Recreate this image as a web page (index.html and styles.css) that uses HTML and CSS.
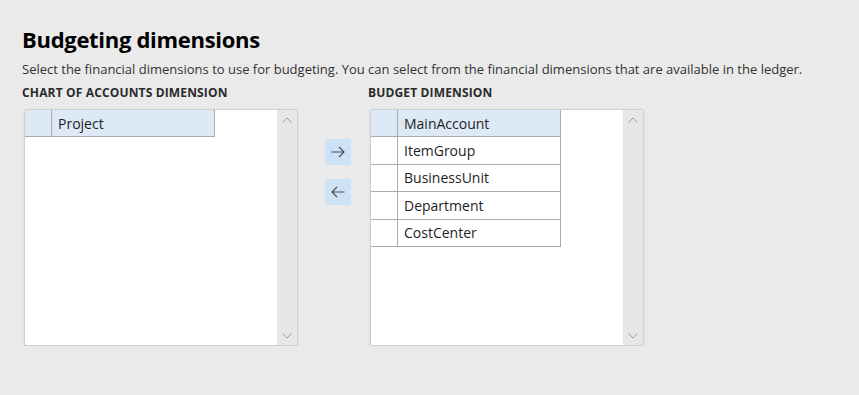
FILE: index.html
```html
<!DOCTYPE html>
<html lang="en">
<head>
    <meta charset="UTF-8">
    <meta name="viewport" content="width=device-width, initial-scale=1.0">
    <title>Budgeting dimensions</title>
    <link rel="stylesheet" href="styles.css">
</head>
<body>
    <div class="page">
        <h1>Budgeting dimensions</h1>
        <p class="intro">Select the financial dimensions to use for budgeting. You can select from the financial dimensions that are available in the ledger.</p>

        <div class="dimensions">
            <div class="panel">
                <div class="panel-label">CHART OF ACCOUNTS DIMENSION</div>
                <div class="list-box">
                    <table class="grid">
                        <tr class="selected"><td class="marker"></td><td>Project</td></tr>
                    </table>
                    <div class="scrollbar">
                        <svg width="10" height="6" viewBox="0 0 10 6"><path d="M0.5 5.5 L5 1 L9.5 5.5" fill="none" stroke="#9a9a9a" stroke-width="1"/></svg>
                        <svg width="10" height="6" viewBox="0 0 10 6"><path d="M0.5 0.5 L5 5 L9.5 0.5" fill="none" stroke="#9a9a9a" stroke-width="1"/></svg>
                    </div>
                </div>
            </div>

            <div class="transfer">
                <button class="move-btn" title="Add">
                    <svg width="16" height="16" viewBox="0 0 16 16"><path d="M1.5 8 H14 M9 3 L14 8 L9 13" fill="none" stroke="#4a4a4a" stroke-width="1.1"/></svg>
                </button>
                <button class="move-btn" title="Remove">
                    <svg width="16" height="16" viewBox="0 0 16 16"><path d="M14.5 8 H2 M7 3 L2 8 L7 13" fill="none" stroke="#4a4a4a" stroke-width="1.1"/></svg>
                </button>
            </div>

            <div class="panel">
                <div class="panel-label">BUDGET DIMENSION</div>
                <div class="list-box">
                    <table class="grid">
                        <tr class="selected"><td class="marker"></td><td>MainAccount</td></tr>
                        <tr><td class="marker"></td><td>ItemGroup</td></tr>
                        <tr><td class="marker"></td><td>BusinessUnit</td></tr>
                        <tr><td class="marker"></td><td>Department</td></tr>
                        <tr><td class="marker"></td><td>CostCenter</td></tr>
                    </table>
                    <div class="scrollbar">
                        <svg width="10" height="6" viewBox="0 0 10 6"><path d="M0.5 5.5 L5 1 L9.5 5.5" fill="none" stroke="#9a9a9a" stroke-width="1"/></svg>
                        <svg width="10" height="6" viewBox="0 0 10 6"><path d="M0.5 0.5 L5 5 L9.5 0.5" fill="none" stroke="#9a9a9a" stroke-width="1"/></svg>
                    </div>
                </div>
            </div>
        </div>
    </div>
</body>
</html>
```

FILE: styles.css
```css
body {
    margin: 0;
    background-color: #eaeaea;
    font-family: "Open Sans", "Noto Sans", sans-serif;
    color: #222;
}
.page {
    padding: 23px 22px 0 22px;
}
h1 {
    margin: 0;
    font-size: 22px;
    font-weight: 700;
    color: #000;
    line-height: 32px;
    letter-spacing: -0.3px;
}
.intro {
    margin: 5px 0 0 0;
    font-size: 13px;
    line-height: 18px;
    color: #333;
}
.dimensions {
    display: flex;
    align-items: flex-start;
    margin-top: 7px;
}
.panel {
    width: 276px;
}
.panel-label {
    font-size: 12px;
    font-weight: 700;
    color: #2b2b2b;
    line-height: 16px;
    letter-spacing: 0.15px;
    margin-bottom: 8px;
}
.list-box {
    display: flex;
    width: 274px;
    height: 237px;
    margin-left: 2px;
    box-sizing: border-box;
    border: 1px solid #cfcfcf;
    border-radius: 2px;
    background-color: #fff;
    box-shadow: 0 1px 2px rgba(0, 0, 0, 0.12);
}
.grid {
    border-collapse: collapse;
    align-self: flex-start;
    font-size: 14px;
    color: #1e1e1e;
}
.grid td {
    height: 26.5px;
    width: 156px;
    padding: 0 0 0 6px;
    border-right: 1px solid #ababab;
    border-bottom: 1px solid #ababab;
    border-top: 1px solid #ababab;
}
.grid tr:first-child td {
    height: 26px;
    border-top: none;
}
.grid td.marker {
    width: 26px;
    padding: 0;
}
.grid tr.selected td {
    background-color: #dde9f6;
}
.scrollbar {
    margin-left: auto;
    width: 20px;
    background-color: #e6e6e6;
    display: flex;
    flex-direction: column;
    justify-content: space-between;
    align-items: center;
    padding: 7px 0 6px 0;
}
.transfer {
    display: flex;
    flex-direction: column;
    gap: 14px;
    padding: 54px 0 0 27px;
    width: 43px;
}
.move-btn {
    width: 26px;
    height: 26px;
    padding: 0;
    border: none;
    border-radius: 2px;
    background-color: #cce2f6;
    display: flex;
    align-items: center;
    justify-content: center;
    cursor: pointer;
}
```
